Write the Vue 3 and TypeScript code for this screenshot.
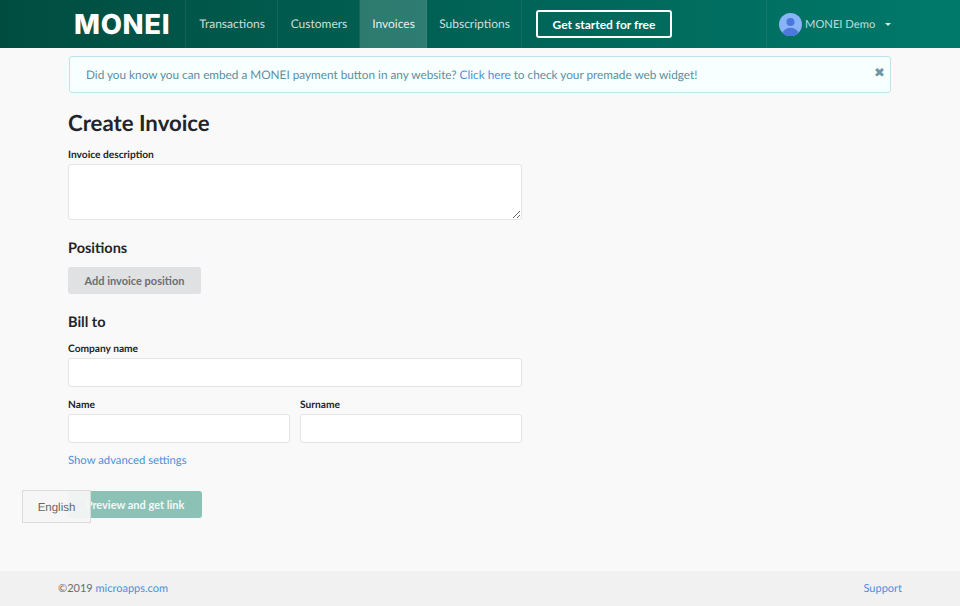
<script setup lang="ts">
const navItems = [
  { label: 'Transactions', width: 92, active: false },
  { label: 'Customers', width: 82, active: false },
  { label: 'Invoices', width: 67, active: true },
  { label: 'Subscriptions', width: 95, active: false },
]
</script>

<template>
  <div class="page">
    <header class="topbar">
      <div class="brand">MONEI</div>
      <nav class="nav">
        <a
          v-for="item in navItems"
          :key="item.label"
          class="nav-link"
          :class="{ active: item.active }"
          :style="{ width: item.width + 'px' }"
        >{{ item.label }}</a>
      </nav>
      <div class="cta-wrap"><button class="cta">Get started for free</button></div>
      <div class="user">
        <svg class="avatar" viewBox="0 0 24 24" width="23" height="23">
          <defs><clipPath id="av"><circle cx="12" cy="12" r="12" /></clipPath></defs>
          <circle cx="12" cy="12" r="12" fill="#8ab4f8" />
          <g clip-path="url(#av)" fill="#4a78dc">
            <circle cx="12" cy="9.4" r="4.2" />
            <ellipse cx="12" cy="22" rx="8.5" ry="6.5" />
          </g>
        </svg>
        <span class="user-name">MONEI Demo</span>
        <span class="caret"></span>
      </div>
    </header>

    <main class="content">
      <div class="alert">
        <span>Did you know you can embed a MONEI payment button in any website? <a class="alert-link">Click here</a> to check your premade web widget!</span>
        <span class="close">✖</span>
      </div>

      <h1 class="title">Create Invoice</h1>

      <form class="form" @submit.prevent>
        <label class="label">Invoice description</label>
        <textarea class="control textarea"></textarea>

        <h2 class="section positions">Positions</h2>
        <button type="button" class="btn-grey">Add invoice position</button>

        <h2 class="section billto">Bill to</h2>
        <label class="label">Company name</label>
        <input class="control input" />

        <div class="row">
          <div class="col">
            <label class="label">Name</label>
            <input class="control input" />
          </div>
          <div class="col">
            <label class="label">Surname</label>
            <input class="control input" />
          </div>
        </div>

        <a class="advanced">Show advanced settings</a>
        <button type="button" class="btn-primary">Preview and get link</button>
      </form>
    </main>

    <footer class="footer">
      <span>©2019 <a class="link">microapps.com</a></span>
      <a class="link">Support</a>
    </footer>

    <div class="lang">English</div>
  </div>
</template>

<style>
html, body { margin: 0; padding: 0; background: #f9f9f9; }
</style>

<style scoped>
.page {
  position: relative;
  width: 960px;
  height: 606px;
  display: flex;
  flex-direction: column;
  overflow: hidden;
  background: #f9f9f9;
  font-family: Lato, "Noto Sans", sans-serif;
  text-rendering: geometricPrecision;
  color: #212529;
}
.topbar {
  height: 48px;
  flex: none;
  display: flex;
  align-items: stretch;
  background: linear-gradient(90deg, #004d40 0%, #00796b 100%);
  padding-left: 74px;
  box-sizing: border-box;
}
.brand {
  width: 111px;
  flex: none;
  font-family: Inter, Lato, sans-serif;
  font-size: 27.5px;
  font-weight: 800;
  letter-spacing: 0.7px;
  line-height: 48px;
  color: #fff;
}
.nav {
  display: flex;
  border-left: 1px solid rgba(255, 255, 255, 0.07);
}
.nav-link {
  box-sizing: border-box;
  flex: none;
  padding-left: 1px;
  line-height: 48px;
  text-align: center;
  font-size: 12px;
  color: rgba(255, 255, 255, 0.8);
  border-right: 1px solid rgba(255, 255, 255, 0.07);
}
.nav-link.active {
  background: rgba(255, 255, 255, 0.18);
  color: rgba(255, 255, 255, 0.9);
}
.cta-wrap {
  width: 245px;
  flex: none;
  display: flex;
  align-items: center;
  padding-left: 14px;
  box-sizing: border-box;
  border-right: 1px solid rgba(255, 255, 255, 0.07);
}
.cta {
  width: 136px;
  height: 28px;
  box-sizing: border-box;
  border: 2px solid #fff;
  border-radius: 3px;
  background: transparent;
  color: #fff;
  font: 700 12px Lato, sans-serif;
  padding: 0;
}
.user {
  display: flex;
  align-items: center;
  padding-left: 12px;
}
.avatar { display: block; flex: none; }
.user-name {
  margin-left: 3px;
  font-size: 11.2px;
  color: rgba(255, 255, 255, 0.75);
}
.caret {
  margin-left: 10px;
  width: 0;
  height: 0;
  border-left: 3px solid transparent;
  border-right: 3px solid transparent;
  border-top: 3px solid rgba(255, 255, 255, 0.85);
}
.content {
  flex: 1;
  padding: 8px 69px 0 68px;
}
.alert {
  position: relative;
  box-sizing: border-box;
  height: 37px;
  margin-left: 1px;
  padding: 0 16px;
  display: flex;
  align-items: center;
  background: #f7ffff;
  border: 1px solid #bee5eb;
  border-radius: 3px;
  font-size: 11.77px;
  color: #5c8fa0;
}
.alert-link { color: #4a90d9; }
.close {
  position: absolute;
  right: 5px;
  top: 8px;
  font-size: 13px;
  line-height: 14px;
  color: #6b96a5;
}
.title {
  margin: 16px 0 0;
  font-size: 22.2px;
  line-height: 28px;
  font-weight: 700;
  color: #212529;
}
.form {
  width: 454px;
  display: flex;
  flex-direction: column;
  align-items: flex-start;
  margin-top: 10px;
}
.label {
  display: block;
  padding-top: 1px;
  font-size: 10.2px;
  line-height: 14px;
  font-weight: 700;
  margin-bottom: 2px;
  color: #212529;
}
.control {
  display: block;
  box-sizing: border-box;
  width: 100%;
  background: #fff;
  border: 1px solid #e2e4e6;
  border-radius: 3px;
  margin: 0;
  outline: none;
}
.textarea { height: 56px; }
.input { height: 29px; }
.section {
  margin: 0;
  font-size: 14.5px;
  line-height: 18px;
  font-weight: 700;
  color: #212529;
}
.positions { margin-top: 20px; }
.btn-grey {
  margin-top: 9px;
  width: 133px;
  height: 27px;
  padding: 0;
  border: none;
  border-radius: 3px;
  background: #e0e1e2;
  color: #6c6e70;
  font: 700 11px Lato, sans-serif;
}
.billto { margin-top: 20px; margin-bottom: 9px; }
.row {
  width: 100%;
  display: flex;
  gap: 10px;
  margin-top: 10px;
}
.col { flex: 1; min-width: 0; }
.advanced {
  margin-top: 10px;
  font-size: 11.3px;
  line-height: 15px;
  color: #4a90d9;
}
.btn-primary {
  margin-top: 23px;
  width: 134px;
  height: 27px;
  padding: 0;
  border: none;
  border-radius: 3px;
  background: #8cc1b6;
  color: #f4f9f8;
  font: 700 11px Lato, sans-serif;
}
.footer {
  height: 35px;
  flex: none;
  box-sizing: border-box;
  padding: 0 58px 1px;
  display: flex;
  align-items: center;
  justify-content: space-between;
  background: #f1f1f1;
  font-size: 11px;
  color: #6b6b6b;
}
.link { color: #4a90d9; }
.lang {
  position: absolute;
  left: 22px;
  top: 490px;
  width: 69px;
  height: 33px;
  box-sizing: border-box;
  padding-top: 2px;
  border: 1px solid #dcdcdc;
  background: rgba(245, 245, 245, 0.94);
  display: flex;
  align-items: center;
  justify-content: center;
  font-family: "Liberation Sans", Arial, sans-serif;
  font-size: 11.5px;
  color: #666;
}
</style>
